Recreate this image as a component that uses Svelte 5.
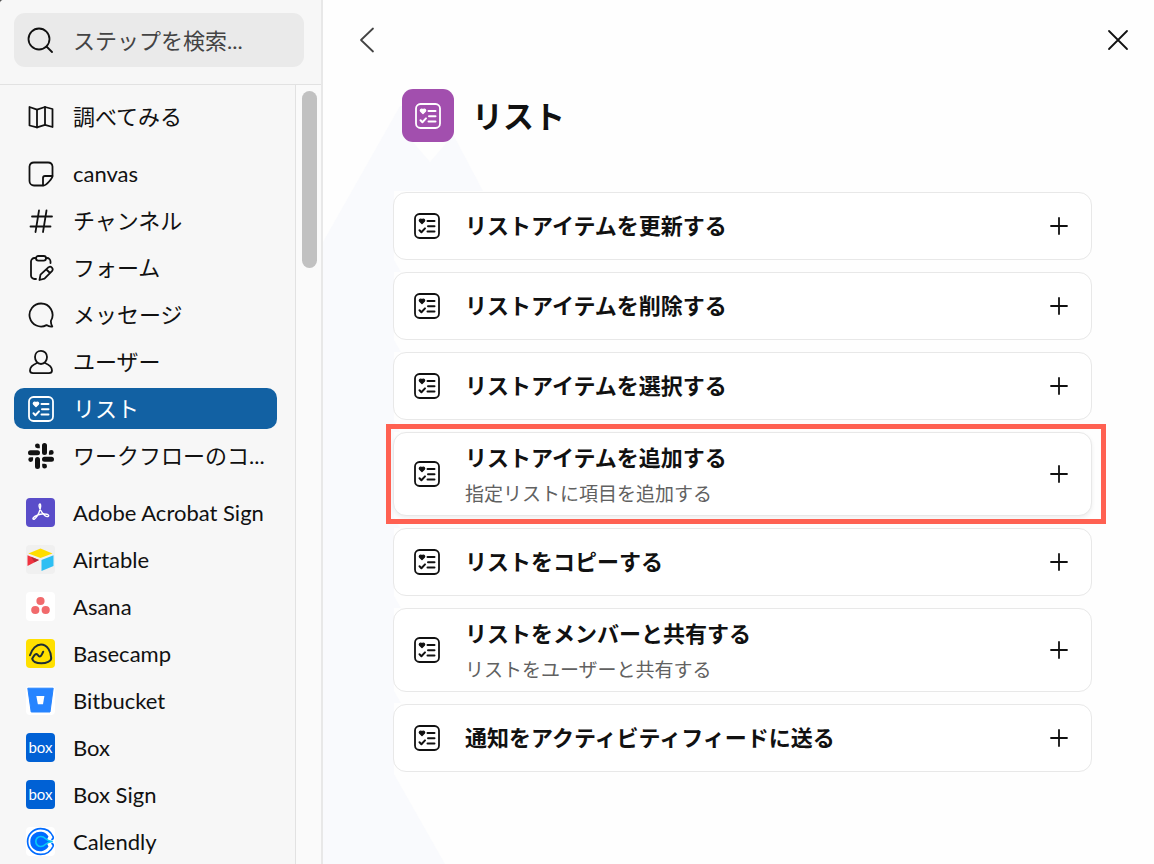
<script lang="ts">
	interface Item { icon: string; label: string; }
	interface Step { title: string; note?: string; marked?: boolean; }

	const groups: Item[][] = [
		[{ icon: 'map', label: '調べてみる' }],
		[
			{ icon: 'canvas', label: 'canvas' },
			{ icon: 'channel', label: 'チャンネル' },
			{ icon: 'form', label: 'フォーム' },
			{ icon: 'message', label: 'メッセージ' },
			{ icon: 'user', label: 'ユーザー' },
			{ icon: 'list', label: 'リスト' },
			{ icon: 'slack', label: 'ワークフローのコ...' }
		],
		[
			{ icon: 'acrobat', label: 'Adobe Acrobat Sign' },
			{ icon: 'airtable', label: 'Airtable' },
			{ icon: 'asana', label: 'Asana' },
			{ icon: 'basecamp', label: 'Basecamp' },
			{ icon: 'bitbucket', label: 'Bitbucket' },
			{ icon: 'box', label: 'Box' },
			{ icon: 'box', label: 'Box Sign' },
			{ icon: 'calendly', label: 'Calendly' }
		]
	];

	const steps: Step[] = [
		{ title: 'リストアイテムを更新する' },
		{ title: 'リストアイテムを削除する' },
		{ title: 'リストアイテムを選択する' },
		{ title: 'リストアイテムを追加する', note: '指定リストに項目を追加する', marked: true },
		{ title: 'リストをコピーする' },
		{ title: 'リストをメンバーと共有する', note: 'リストをユーザーと共有する' },
		{ title: '通知をアクティビティフィードに送る' }
	];

	let query = $state('');
	let selected = $state('リスト');
</script>

{#snippet listIcon()}
	<svg class="line" viewBox="0 0 26 26" width="26" height="26" aria-hidden="true">
		<rect x="1" y="1" width="24" height="24" rx="4.5" />
		<path d="M13.5 8H20.5M14 13.3H20.5M13.5 18.5H20.5M5.5 17.3L7.4 19.2L11 15.4" stroke-width="2" />
		<path d="M8 10.4L5.7 8.2C4.8 7.2 6 5.6 7.3 6.3L8 6.9L8.7 6.3C10 5.6 11.2 7.2 10.3 8.2Z" fill="currentColor" stroke-width="1.4" />
	</svg>
{/snippet}

{#snippet navIcon(name: string)}
	{#if name === 'list'}
		{@render listIcon()}
	{:else if name === 'map'}
		<svg class="line" viewBox="0 0 26 26" width="26" height="26" aria-hidden="true">
			<path d="M1.5 3L9 5.6L17 3L24.5 5V23L17 20.8L9 23.4L1.5 21.5Z" />
			<path d="M9 5.6V23.4M17 3V20.8" />
		</svg>
	{:else if name === 'canvas'}
		<svg class="line" viewBox="0 0 26 26" width="26" height="26" aria-hidden="true">
			<path d="M14.5 24.5H6A4.5 4.5 0 0 1 1.5 20V5.5A4.5 4.5 0 0 1 6 1.5H20A4.5 4.5 0 0 1 24.5 5.5V15C24.5 17 18.5 24.5 15.5 24.5Z" />
			<path d="M15 24.3V17A2 2 0 0 1 17 15H24.4" />
		</svg>
	{:else if name === 'channel'}
		<svg class="line" viewBox="0 0 26 26" width="26" height="26" aria-hidden="true">
			<path d="M11 2.5L7.5 24M18.5 2.5L15 24M4 8.5H24M2.5 18.5H22.5" />
		</svg>
	{:else if name === 'form'}
		<svg class="line" viewBox="0 0 26 26" width="26" height="26" aria-hidden="true">
			<rect x="8" y="1" width="10" height="4.6" rx="2.3" />
			<path d="M8 3H6.5A3.5 3.5 0 0 0 3 6.5V20.5A3.5 3.5 0 0 0 6.5 24H8M18 3H19A3.5 3.5 0 0 1 22.5 6.5V8" />
			<path d="M11.5 25L12.5 19.7L20.6 12.2A2.6 2.6 0 0 1 24.2 15.8L16.5 23.6Z M18.4 14.5L22 18" />
		</svg>
	{:else if name === 'message'}
		<svg class="line" viewBox="0 0 26 26" width="26" height="26" aria-hidden="true">
			<path d="M13 1.5A11.5 11.5 0 1 0 18.5 23.1C20.3 24.3 22.3 24.8 24.3 24.5C23.2 22.8 22.8 21 22.9 18.9A11.5 11.5 0 0 0 13 1.5Z" />
		</svg>
	{:else if name === 'user'}
		<svg class="line" viewBox="0 0 26 26" width="26" height="26" aria-hidden="true">
			<path d="M13 1.8C9.4 1.8 7 4.5 7 8C7 11.8 9.5 15 13 15S19 11.8 19 8C19 4.5 16.6 1.8 13 1.8Z" />
			<path d="M9 14C5 15.6 2 18.5 2 21.5C2 23.2 3 24.2 5 24.2H21C23 24.2 24 23.2 24 21.5C24 18.5 21 15.6 17 14" />
		</svg>
	{:else if name === 'slack'}
		<svg viewBox="0 0 26 26" width="26" height="26" fill="none" stroke="currentColor" stroke-width="5" stroke-linecap="round" aria-hidden="true">
			<path d="M9.5 9.7H2.5M16.5 9.5V2.5M16.5 16.3H23.5M9.5 16.5V23.5" />
			<path d="M9.5 5.2H9.4A2.4 2.4 0 1 1 11.8 2.8V5.2ZM20.9 9.5V9.4A2.4 2.4 0 1 1 23.3 11.8H20.9ZM16.5 20.8H16.6A2.4 2.4 0 1 1 14.2 23.2V20.8ZM5.1 16.5V16.6A2.4 2.4 0 1 1 2.7 14.2H5.1Z" fill="currentColor" stroke="none" />
		</svg>
	{:else if name === 'acrobat'}
		<svg viewBox="0 0 29 29" width="29" height="29" aria-hidden="true">
			<rect width="29" height="29" rx="4" fill="#5a4dc9" />
			<path d="M14 6C12.2 6.5 13.2 10.5 16 14.3C18.2 17.3 20.6 19.3 22.3 18.3C24 16.7 19 15.2 14.5 16.2C10 17.1 6.4 19.3 7 20.9C8 22.7 11.3 18.6 13 14.4C14.5 10.6 15.3 6.5 14 6Z" fill="none" stroke="#fff" stroke-width="1.4" stroke-linejoin="round" />
		</svg>
	{:else if name === 'airtable'}
		<svg viewBox="0 0 29 29" width="29" height="29" aria-hidden="true">
			<rect width="29" height="29" rx="4" fill="#f0f0f0" />
			<path d="M2.4 8.5L14.5 3.5L26.5 8.5L14.5 13Z" fill="#fd0" />
			<path d="M15.5 15L27.5 10.2V21L15.5 26Z" fill="#2ebff3" />
			<path d="M1.5 10.3L13 15L1.5 21Z" fill="#f0323f" />
			<path d="M5 11.8L13 15L8.5 17.3Z" fill="#ba2b37" />
		</svg>
	{:else if name === 'asana'}
		<svg viewBox="0 0 29 29" width="29" height="29" fill="#f16a6c" aria-hidden="true">
			<rect width="29" height="29" rx="4" fill="#fff" />
			<circle cx="14.5" cy="9" r="4.1" />
			<circle cx="9.3" cy="18" r="4.1" />
			<circle cx="19.7" cy="18" r="4.1" />
		</svg>
	{:else if name === 'basecamp'}
		<svg viewBox="0 0 29 29" width="29" height="29" aria-hidden="true">
			<rect width="29" height="29" rx="4" fill="#ffe000" />
			<path d="M4 16.3C6 9.5 10.5 5.5 15 5.5C21.5 5.5 25.2 13 25.2 19C25.2 22.3 20.5 24.3 15.3 24.3C10 24.3 6.8 22.3 6.2 19.7C7.3 17.5 8.8 15.3 10.3 15C12 14.7 12 17.6 13.5 17.6C15 17.6 16.5 14.5 17.2 12.7" fill="none" stroke="#1d2d35" stroke-width="2" stroke-linecap="round" stroke-linejoin="round" />
		</svg>
	{:else if name === 'bitbucket'}
		<svg viewBox="0 0 29 29" width="29" height="29" aria-hidden="true">
			<rect width="29" height="29" rx="4" fill="#fff" />
			<path d="M1.8 2.2H27.2L24 26H5.2Z" fill="#2684ff" stroke="#2684ff" stroke-linejoin="round" />
			<path d="M10.3 10H18.4L17 18.2H11.9Z" fill="#fff" />
		</svg>
	{:else if name === 'box'}
		<svg viewBox="0 0 29 29" width="29" height="29" aria-hidden="true">
			<rect width="29" height="29" rx="4" fill="#0061d5" />
			<text x="14.5" y="20" class="box-mark">box</text>
		</svg>
	{:else if name === 'calendly'}
		<svg viewBox="0 0 29 29" width="29" height="29" fill="none" aria-hidden="true">
			<rect width="29" height="29" rx="4" fill="#fff" />
			<path d="M27 9.5C24.8 4.6 20 1.6 14.5 1.6A12.9 12.9 0 0 0 14.5 27.4C20 27.4 24.8 24.4 27 19.5C27.6 18 27 17 26 16.6M27 9.5C27.6 11 27 12 26 12.4" stroke="#006bff" stroke-width="1.7" stroke-linecap="round" />
			<path d="M22.5 9.5A9.8 9.8 0 1 0 22.5 19.5L20 14.5Z" fill="#006bff" />
			<path d="M26 14.5C22.5 14 20.8 13 19.3 11.5C17.8 10 16.6 9.5 14.8 9.5A5 5 0 0 0 14.8 19.5C16.6 19.5 17.8 19 19.3 17.5C20.8 16 22.5 15 26 14.5Z" fill="#006bff" stroke="#0ac8f5" stroke-width="1.7" stroke-linejoin="round" />
		</svg>
	{/if}
{/snippet}

<div class="app">
	<aside class="sidebar">
		<div class="search-row">
			<label class="search">
				<svg class="line" viewBox="0 0 26 26" width="26" height="26" aria-hidden="true">
					<circle cx="12" cy="12" r="10.5" />
					<path d="M19.5 19.5L25 25" />
				</svg>
				<input type="text" placeholder="ステップを検索..." aria-label="ステップを検索" bind:value={query} />
			</label>
		</div>
		<div class="side-body">
			<nav>
				{#each groups as group}
					<ul>
						{#each group as item}
							<li>
								<button class="item" class:selected={selected === item.label} onclick={() => (selected = item.label)}>
									<span class="item-icon">{@render navIcon(item.icon)}</span>
									<span class="item-label">{item.label}</span>
								</button>
							</li>
						{/each}
					</ul>
				{/each}
			</nav>
			<div class="track"><div class="thumb"></div></div>
		</div>
	</aside>

	<main>
		<!-- faint peaks behind the cards -->
		<svg class="peaks" viewBox="0 0 160 864" width="160" height="864" aria-hidden="true">
			<path d="M0 242L77 106H115L132 138L160 191H71V260L78 272H71V340L78 352H71V421L77 432H71V517L77 528H71V596L78 608H71V691L78 703H71V774L122 864H0Z" />
			<path class="notch" d="M88 140L107 162L126 140Z" />
		</svg>

		<div class="top">
			<button class="plain" aria-label="戻る">
				<svg class="line back" viewBox="0 0 26 26" width="26" height="26" aria-hidden="true"><path d="M19 1.5L7 13L19 24.5" /></svg>
			</button>
			<button class="plain" aria-label="閉じる">
				<svg class="line" viewBox="0 0 26 26" width="26" height="26" aria-hidden="true"><path d="M4 4L22 22M22 4L4 22" /></svg>
			</button>
		</div>

		<div class="content">
			<div class="title">
				<span class="badge">{@render listIcon()}</span>
				<h1>リスト</h1>
			</div>

			<ul class="steps">
				{#each steps as step}
					<li class:marked={step.marked}>
						<button class="card">
							{@render listIcon()}
							<span class="text">
								<span class="name">{step.title}</span>
								{#if step.note}<span class="note">{step.note}</span>{/if}
							</span>
							<svg class="line" viewBox="0 0 18 18" width="18" height="18" aria-hidden="true"><path d="M9 1V17M1 9H17" /></svg>
						</button>
					</li>
				{/each}
			</ul>
		</div>
	</main>
</div>

<style>
	:global(body) {
		background: #555;
	}

	.app {
		display: flex;
		height: 100vh;
		overflow: hidden;
		border-top-left-radius: 4px;
		background: #fefefe;
		color: #111;
		font-family: Lato, 'Noto Sans CJK JP', sans-serif;
		font-size: 22px;
	}

	button, input {
		font: inherit;
		color: inherit;
		background: none;
		border: none;
		padding: 0;
		margin: 0;
	}

	button { cursor: pointer; }

	ul {
		list-style: none;
		margin: 0;
		padding: 0;
	}

	svg {
		display: block;
		flex: none;
	}

	.line {
		fill: none;
		stroke: currentColor;
		stroke-width: 1.8;
		stroke-linecap: round;
		stroke-linejoin: round;
	}

	/* Sidebar */
	.sidebar {
		flex: none;
		display: flex;
		flex-direction: column;
		box-sizing: border-box;
		width: 323px;
		background: #f7f7f7;
		border-right: 2px solid #e8e8e8;
	}

	.search-row {
		padding: 13px 17px 17px 14px;
		border-bottom: 1px solid #e2e2e2;
	}

	.search {
		display: flex;
		align-items: center;
		gap: 20px;
		height: 54px;
		padding: 0 13px;
		border-radius: 11px;
		background: #eaeaea;
	}

	.search input {
		flex: 1;
		min-width: 0;
		outline: none;
	}

	.search input::placeholder {
		color: #444;
		opacity: 1;
	}

	.side-body {
		flex: 1;
		min-height: 0;
		display: flex;
	}

	nav {
		flex: 1;
		min-width: 0;
		display: flex;
		flex-direction: column;
		gap: 16px;
		padding: 11px 18px 0 14px;
		overflow: hidden;
	}

	nav ul {
		display: flex;
		flex-direction: column;
		gap: 6px;
	}

	.item {
		display: flex;
		align-items: center;
		gap: 18px;
		width: 100%;
		height: 41px;
		padding: 0 12px;
		border-radius: 10px;
		text-align: left;
	}

	.item.selected {
		background: #1261a3;
		color: #fff;
	}

	.item-icon {
		display: flex;
		justify-content: center;
		width: 29px;
	}

	.item-label {
		white-space: nowrap;
		line-height: 32px;
	}

	.box-mark {
		font-size: 15px;
		fill: #fff;
		text-anchor: middle;
	}

	.track {
		flex: none;
		width: 15px;
		padding: 6px 4px 0 6px;
		background: #fafafa;
		border-left: 1px solid #e2e2e2;
	}

	.thumb {
		height: 177px;
		border-radius: 8px;
		background: #c1c1c1;
	}

	/* Main pane */
	main {
		position: relative;
		flex: 1;
		min-width: 0;
	}

	.peaks {
		position: absolute;
		top: 0;
		left: 0;
		fill: #f9fafd;
	}

	.peaks .notch { fill: #fefefe; }

	.top {
		position: relative;
		display: flex;
		justify-content: space-between;
		padding: 27px 23px 0 31px;
	}

	.back { color: #444; }

	.content {
		position: relative;
		padding: 36px 62px 0 70px;
	}

	.title {
		display: flex;
		align-items: center;
		gap: 18px;
		padding: 0 9px;
		margin-bottom: 50px;
	}

	.badge {
		display: flex;
		align-items: center;
		justify-content: center;
		width: 52px;
		height: 53px;
		border-radius: 11px;
		background: #a24fae;
		color: #fff;
	}

	h1 {
		margin: 0;
		font-size: 31px;
		line-height: 44px;
		font-weight: 700;
	}

	.steps {
		display: flex;
		flex-direction: column;
		gap: 12px;
	}

	.steps li { position: relative; }

	.card {
		display: flex;
		align-items: center;
		gap: 25px;
		box-sizing: border-box;
		width: 100%;
		min-height: 68px;
		padding: 7px 23px 7px 20px;
		border: 1px solid #e8e8e8;
		border-radius: 13px;
		background: #fff;
		text-align: left;
	}

	.text {
		flex: 1;
		min-width: 0;
		display: flex;
		flex-direction: column;
		gap: 4px;
	}

	.name {
		font-weight: 700;
		line-height: 36px;
	}

	.note {
		font-size: 19px;
		line-height: 28px;
		color: #616161;
	}

	.marked .card { box-shadow: 0 2px 4px #0001; }

	.marked::after {
		content: '';
		position: absolute;
		inset: -8px -14px -8px -7px;
		border: 5px solid #ff6152;
		pointer-events: none;
	}
</style>
